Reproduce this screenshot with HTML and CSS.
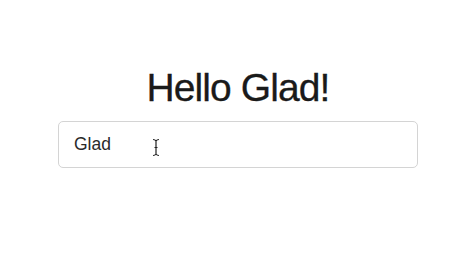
FILE: index.html
```html
<!DOCTYPE html>
<html>
<head>
<meta charset="utf-8">
<link rel="stylesheet" href="styles.css">
</head>
<body>
<div class="page">
  <h1 class="title">Hello Glad!</h1>
  <div class="field">
    <span class="value">Glad</span>
    <svg class="cursor" width="8" height="19" viewBox="0 0 8 19">
      <path d="M1 1.5 Q3 1.5 4 3 Q5 1.5 7 1.5 M4 3 V16 M1 17.5 Q3 17.5 4 16 Q5 17.5 7 17.5 M2.5 9.5 H5.5" fill="none" stroke="#222" stroke-width="1.2"/>
    </svg>
  </div>
</div>
</body>
</html>
```
FILE: styles.css
```css
html, body {
  margin: 0;
  padding: 0;
  background: #fff;
}
.page {
  width: 474px;
  height: 266px;
  display: flex;
  flex-direction: column;
  align-items: center;
  padding-top: 63px;
  padding-left: 2px;
  box-sizing: border-box;
  font-family: "Liberation Sans", Arial, sans-serif;
}
.title {
  margin: 0;
  font-size: 39px;
  font-weight: 400;
  color: #1a1a1a;
  line-height: 50px;
  letter-spacing: -0.9px;
  -webkit-text-stroke: 0.3px #1a1a1a;
}
.field {
  margin-top: 8px;
  width: 360px;
  height: 47px;
  box-sizing: border-box;
  border: 1px solid #d4d4d4;
  border-radius: 5px;
  display: flex;
  align-items: center;
  padding-left: 15px;
  padding-bottom: 1px;
  position: relative;
}
.value {
  font-size: 17.5px;
  color: #2a2a2a;
}
.cursor {
  position: absolute;
  left: 93px;
  top: 16px;
}
```
